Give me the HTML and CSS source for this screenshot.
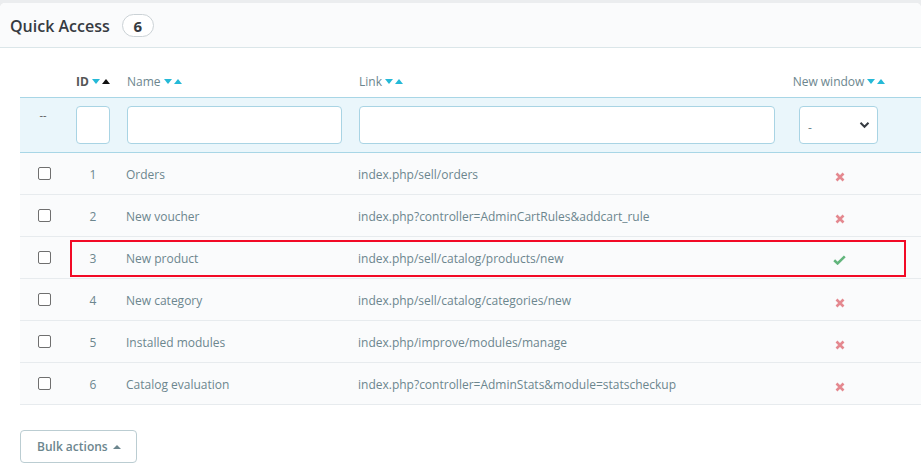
FILE: index.html
```html
<!DOCTYPE html>
<html>
<head>
<meta charset="utf-8">
<link rel="stylesheet" href="styles.css">
</head>
<body>
<div class="card">
  <div class="card-header">
    <h3 class="title">Quick Access</h3>
    <span class="badge">6</span>
  </div>
  <div class="card-body">
    <table class="grid">
      <colgroup>
        <col class="c-check"><col class="c-id"><col class="c-name"><col class="c-link"><col class="c-win"><col class="c-rest">
      </colgroup>
      <thead>
        <tr class="head">
          <th></th>
          <th class="h-id"><span class="active">ID</span><span class="arr down"></span><span class="arr up dark"></span></th>
          <th>Name<span class="arr down"></span><span class="arr up"></span></th>
          <th>Link<span class="arr down"></span><span class="arr up"></span></th>
          <th class="center">New window<span class="arr down"></span><span class="arr up"></span></th>
          <th></th>
        </tr>
        <tr class="filter">
          <td class="dash">--</td>
          <td class="f-id"><input class="inp inp-id" type="text"></td>
          <td class="f-name"><input class="inp inp-name" type="text"></td>
          <td class="f-link"><input class="inp inp-link" type="text"></td>
          <td class="center"><div class="select"><span>-</span><svg class="chev" width="11" height="8" viewBox="0 0 11 8"><path d="M1.5 1.8 L5.5 5.8 L9.5 1.8" fill="none" stroke="#363a41" stroke-width="2"/></svg></div></td>
          <td></td>
        </tr>
      </thead>
      <tbody>
        <tr><td class="cb"><span class="box"></span></td><td class="id">1</td><td class="name">Orders</td><td class="link">index.php/sell/orders</td><td class="center"><svg class="ico" width="10" height="10" viewBox="0 0 10 10"><path d="M1.5 1.5 L8.5 8.5 M8.5 1.5 L1.5 8.5" stroke="#e4888f" stroke-width="2.6"/></svg></td><td></td></tr>
        <tr><td class="cb"><span class="box"></span></td><td class="id">2</td><td class="name">New voucher</td><td class="link">index.php?controller=AdminCartRules&amp;addcart_rule</td><td class="center"><svg class="ico" width="10" height="10" viewBox="0 0 10 10"><path d="M1.5 1.5 L8.5 8.5 M8.5 1.5 L1.5 8.5" stroke="#e4888f" stroke-width="2.6"/></svg></td><td></td></tr>
        <tr><td class="cb"><span class="box"></span></td><td class="id">3</td><td class="name">New product</td><td class="link">index.php/sell/catalog/products/new</td><td class="center"><svg class="ico chk" width="13" height="10" viewBox="0 0 13 10"><path d="M1.2 5.2 L4.6 8.4 L11.8 1.4" fill="none" stroke="#62b57c" stroke-width="2.6"/></svg></td><td></td></tr>
        <tr><td class="cb"><span class="box"></span></td><td class="id">4</td><td class="name">New category</td><td class="link">index.php/sell/catalog/categories/new</td><td class="center"><svg class="ico" width="10" height="10" viewBox="0 0 10 10"><path d="M1.5 1.5 L8.5 8.5 M8.5 1.5 L1.5 8.5" stroke="#e4888f" stroke-width="2.6"/></svg></td><td></td></tr>
        <tr><td class="cb"><span class="box"></span></td><td class="id">5</td><td class="name">Installed modules</td><td class="link">index.php/improve/modules/manage</td><td class="center"><svg class="ico" width="10" height="10" viewBox="0 0 10 10"><path d="M1.5 1.5 L8.5 8.5 M8.5 1.5 L1.5 8.5" stroke="#e4888f" stroke-width="2.6"/></svg></td><td></td></tr>
        <tr><td class="cb"><span class="box"></span></td><td class="id">6</td><td class="name">Catalog evaluation</td><td class="link">index.php?controller=AdminStats&amp;module=statscheckup</td><td class="center"><svg class="ico" width="10" height="10" viewBox="0 0 10 10"><path d="M1.5 1.5 L8.5 8.5 M8.5 1.5 L1.5 8.5" stroke="#e4888f" stroke-width="2.6"/></svg></td><td></td></tr>
      </tbody>
    </table>
    <div class="footer">
      <button class="bulk">Bulk actions<span class="caret"></span></button>
    </div>
    <div class="highlight"></div>
  </div>
</div>
</body>
</html>
```
FILE: styles.css
```css
html, body {
  margin: 0;
  padding: 0;
}
body {
  background: #ebedef;
  font-family: "Open Sans", "Noto Sans", sans-serif;
  font-size: 12px;
  color: #6c868e;
  overflow: hidden;
  width: 921px;
  height: 469px;
}
.card {
  margin-top: 3px;
  background: #fff;
  border-radius: 5px 5px 0 0;
  height: 466px;
}
.card-header {
  height: 45px;
  box-sizing: border-box;
  background: #fafbfc;
  border-bottom: 1px solid #dbe6e9;
  border-radius: 5px 5px 0 0;
  display: flex;
  align-items: center;
  padding-left: 10px;
  padding-top: 1px;
  gap: 12px;
}
.title {
  margin: 0;
  font-size: 16px;
  font-weight: 600;
  color: #363a41;
}
.badge {
  display: inline-flex;
  align-items: center;
  justify-content: center;
  width: 32px;
  height: 23px;
  box-sizing: border-box;
  border: 1px solid #cbd2d6;
  border-radius: 12px;
  background: #fff;
  font-weight: 700;
  font-size: 15px;
  color: #363a41;
}
.card-body {
  position: relative;
  padding: 17px 0 0 20px;
}
.grid {
  border-collapse: collapse;
  table-layout: fixed;
  width: 920px;
}
.c-check { width: 46px; }
.c-id { width: 51px; }
.c-name { width: 232px; }
.c-link { width: 434px; }
.c-win { width: 113px; }
.c-rest { width: 44px; }
.grid th {
  height: 32px;
  padding: 0 0 0 10px;
  text-align: left;
  font-weight: 400;
  color: #6c868e;
  white-space: nowrap;
  vertical-align: middle;
}
.grid th.center, .grid td.center {
  text-align: center;
  padding-left: 0;
}
.grid th.center {
  padding-right: 1px;
}
.grid th .active {
  font-weight: 700;
  color: #555;
}
.arr {
  display: inline-block;
  width: 0;
  height: 0;
  border-left: 4.5px solid transparent;
  border-right: 4.5px solid transparent;
  vertical-align: middle;
  margin-left: 2px;
}
.arr.down {
  border-top: 5px solid #25b9d7;
  margin-left: 3px;
  position: relative;
  top: -1px;
}
.arr.up {
  border-bottom: 5px solid #25b9d7;
  position: relative;
  top: -1px;
}
.arr.up.dark {
  border-bottom-color: #111;
}
.filter td {
  background: #eaf6fb;
  border-top: 1px solid #a8d6e6;
  border-bottom: 1px solid #a8d6e6;
  height: 54px;
  padding: 0;
  vertical-align: middle;
}
.filter td.dash {
  text-align: center;
  vertical-align: top;
  padding-top: 9px;
  color: #555;
  font-size: 11px;
  height: 45px;
}
.filter td.f-id { padding-left: 10px; }
.filter td.f-name { padding-left: 10px; }
.filter td.f-link { padding-left: 10px; }
.inp {
  display: block;
  height: 38px;
  box-sizing: border-box;
  border: 1px solid #a9d4e4;
  border-radius: 4px;
  background: #fff;
  outline: none;
  padding: 0 8px;
}
.inp-id { width: 34px; }
.inp-name { width: 215px; }
.inp-link { width: 416px; }
.select {
  margin-left: 16px;
  width: 79px;
  height: 38px;
  box-sizing: border-box;
  border: 1px solid #a9d4e4;
  border-radius: 4px;
  background: #fff;
  display: flex;
  align-items: center;
  justify-content: space-between;
  padding: 0 7px 0 8px;
  color: #6c868e;
  font-size: 12px;
}
.select span {
  position: relative;
  top: 2px;
}
.chev {
  display: block;
}
tbody td {
  background: #fafbfc;
  border-bottom: 1px solid #e7ebee;
  height: 41px;
  padding: 0;
  vertical-align: middle;
  white-space: nowrap;
}
tbody td.cb {
  text-align: center;
}
.box {
  display: inline-block;
  width: 13px;
  height: 13px;
  box-sizing: border-box;
  border: 1.5px solid #6f6f6f;
  border-radius: 2px;
  background: #fff;
  position: relative;
  top: -1px;
  left: 1px;
  vertical-align: middle;
}
tbody td.id {
  text-align: center;
  padding: 0 7px 0 10px;
}
tbody td.name {
  padding: 0 0 0 9px;
}
tbody td.link {
  padding: 0 0 0 9px;
}
tbody td.id, tbody td.name, tbody td.link {
  line-height: 18px;
  padding-top: 2px;
  height: 39px;
}
.ico {
  display: inline-block;
  vertical-align: middle;
  position: relative;
  top: 2px;
}
.ico.chk {
  top: 1px;
}
.footer {
  padding-top: 25px;
}
.bulk {
  height: 33px;
  padding: 0 15px 0 16px;
  border: 1px solid #bbcdd2;
  border-radius: 4px;
  background: #fff;
  font-family: "Open Sans", "Noto Sans", sans-serif;
  font-size: 12px;
  font-weight: 600;
  color: #6c868e;
  display: flex;
  align-items: center;
}
.caret {
  display: inline-block;
  width: 0;
  height: 0;
  border-left: 4px solid transparent;
  border-right: 4px solid transparent;
  border-bottom: 4px solid #6c868e;
  margin-left: 5px;
}
.highlight {
  position: absolute;
  left: 70px;
  top: 192px;
  width: 836px;
  height: 37px;
  box-sizing: border-box;
  border: 2px solid #f20a26;
  pointer-events: none;
}
```
